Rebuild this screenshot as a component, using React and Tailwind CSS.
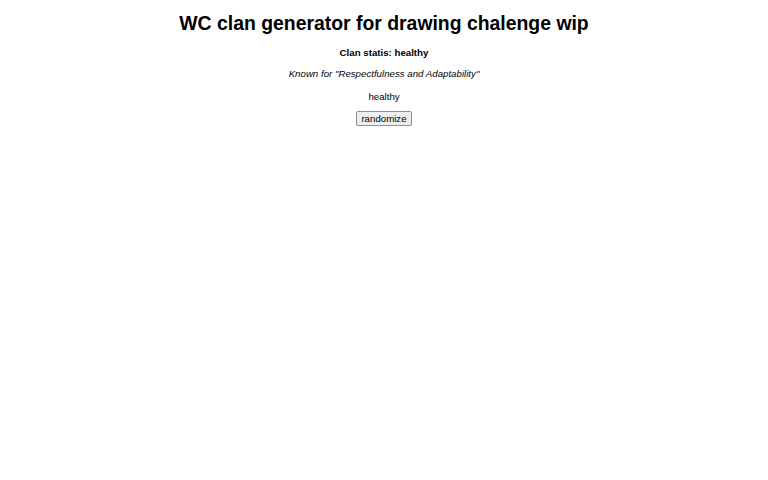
export default function App() {
    return (
        <div className="flex flex-col items-center text-center text-black bg-white min-h-[480px] font-['Liberation_Sans',Arial,sans-serif] text-[9.7px]">
            <h1 className="mt-[12px] mb-[10px] text-[19.4px] leading-[23px] font-bold">WC clan generator for drawing chalenge wip</h1>
            <h4 className="mt-[2px] font-bold leading-[12px]">Clan statis: healthy</h4>
            <p className="mt-[9px] italic leading-[12px]">Known for "Respectfulness and Adaptability"</p>
            <p className="mt-[11px] leading-[12px]">healthy</p>
            <button className="mt-[8px] px-[4px] h-[15px] leading-[13px] text-[9.7px] bg-[#efefef] border border-[#8f8f8f] rounded-[2px]">randomize</button>
        </div>
    )
}
